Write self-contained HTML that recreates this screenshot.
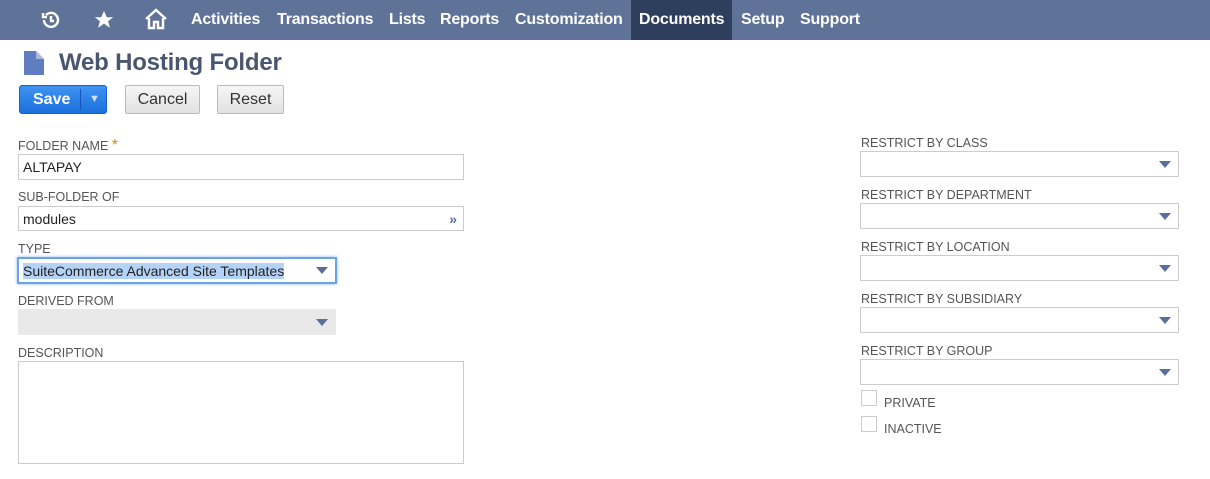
<!DOCTYPE html><html><head><style>
*{box-sizing:border-box;margin:0;padding:0}
body{width:1210px;height:479px;background:#fff;font-family:"Liberation Sans",sans-serif;position:relative;overflow:hidden;color:#333}
.nav{position:absolute;left:0;top:0;width:1210px;height:40px;background:#5f7399}
.nav span{position:absolute;top:0;height:40px;line-height:40px;color:#fff;font-weight:bold;font-size:16px;letter-spacing:-0.2px}
.act{background:#2e3f5e;padding:0 8px}
.a{position:absolute}
.lbl{position:absolute;font-size:12.5px;color:#555;text-transform:uppercase}
.box{position:absolute;border:1px solid #ccc;background:#fff;font-size:14px;color:#222;padding-left:4px;line-height:24px}
.tri{position:absolute;width:0;height:0;border-left:6px solid transparent;border-right:6px solid transparent;border-top:7px solid #5a6f96}
.btn{position:absolute;top:85px;height:29px;border:1px solid #bbb;border-radius:2px;background:linear-gradient(#f6f6f6,#e2e2e2);font-size:16px;color:#333;text-align:center;line-height:27px}
.cb{position:absolute;width:16px;height:16px;border:1px solid #ccc}
</style></head><body>
<div class="nav">
<svg class="a" style="left:40px;top:9px" width="22" height="22" viewBox="0 0 22 22" fill="none" stroke="#fff" stroke-width="2.4"><path d="M4 11a7 7 0 1 0 2-5"/><path d="M3 4v4h4" /><path d="M11 7v5h3"/></svg>
<svg class="a" style="left:93px;top:9px" width="22" height="22" viewBox="0 0 24 24"><path fill="#fff" d="M12 2l3 7h7l-5.6 4.3 2.1 7.2L12 16l-6.5 4.5 2.1-7.2L2 9h7z"/></svg>
<svg class="a" style="left:144px;top:7px" width="24" height="24" viewBox="0 0 24 24" fill="none" stroke="#fff" stroke-width="2.4"><path d="M2 12L12 3l10 9"/><path d="M5 11v10h5v-6h4v6h5V11"/></svg>
<span style="left:191px">Activities</span><span style="left:277px">Transactions</span><span style="left:389px">Lists</span><span style="left:440px">Reports</span><span style="left:515px">Customization</span>
<span class="act" style="left:631px;width:101px">Documents</span><span style="left:741px">Setup</span><span style="left:800px">Support</span>
</div>
<svg class="a" style="left:23px;top:49px" width="22" height="28" viewBox="0 0 22 28"><path fill="#5f7dc0" d="M1 2h12l8 8v16H1z"/><path fill="#a9b8dc" d="M13 2v8h8z"/></svg>
<div class="a" style="left:59px;top:49px;font-size:24px;font-weight:bold;color:#4a5670;letter-spacing:-0.2px">Web Hosting Folder</div>
<div class="a" style="left:19px;top:85px;width:88px;height:29px;border-radius:3px;background:linear-gradient(#3f93f2,#1a6fdc);border:1px solid #1860c8;color:#fff;font-weight:bold;font-size:16px;line-height:27px"><span style="position:absolute;left:13px">Save</span><span style="position:absolute;left:60px;top:3px;height:21px;border-left:1px solid #1656b8"></span><span style="position:absolute;left:69px;font-size:11px;color:#cfe0ff">▼</span></div>
<div class="btn" style="left:125px;width:75px">Cancel</div>
<div class="btn" style="left:217px;width:67px">Reset</div>
<div class="lbl" style="left:18px;top:137px">Folder Name <span style="color:#d08a00;font-size:16px">*</span></div>
<div class="box" style="left:18px;top:154px;width:446px;height:26px">ALTAPAY</div>
<div class="lbl" style="left:18px;top:190px">Sub-Folder of</div>
<div class="box" style="left:18px;top:206px;width:446px;height:25px">modules<span style="position:absolute;right:6px;top:0;color:#5a6f96;font-size:14px;font-weight:bold">»</span></div>
<div class="lbl" style="left:18px;top:242px">Type</div>
<div class="box" style="left:17px;top:257px;width:320px;height:27px;border:2px solid #6aa3e8;box-shadow:0 0 3px #8ab8f0"><span style="background:#b5d3f7">SuiteCommerce Advanced Site Templates</span></div>
<div class="tri" style="left:316px;top:267px"></div>
<div class="lbl" style="left:18px;top:294px">Derived From</div>
<div class="a" style="left:18px;top:309px;width:318px;height:26px;background:#e9e9e9"></div>
<div class="tri" style="left:316px;top:319px"></div>
<div class="lbl" style="left:18px;top:346px">Description</div>
<div class="box" style="left:18px;top:361px;width:446px;height:103px"></div>
<div class="lbl" style="left:861px;top:136px">Restrict by Class</div><div class="box" style="left:860px;top:151px;width:319px;height:26px"></div><div class="tri" style="left:1159px;top:161px"></div>
<div class="lbl" style="left:861px;top:188px">Restrict by Department</div><div class="box" style="left:860px;top:203px;width:319px;height:26px"></div><div class="tri" style="left:1159px;top:213px"></div>
<div class="lbl" style="left:861px;top:240px">Restrict by Location</div><div class="box" style="left:860px;top:255px;width:319px;height:26px"></div><div class="tri" style="left:1159px;top:265px"></div>
<div class="lbl" style="left:861px;top:292px">Restrict by Subsidiary</div><div class="box" style="left:860px;top:307px;width:319px;height:26px"></div><div class="tri" style="left:1159px;top:317px"></div>
<div class="lbl" style="left:861px;top:344px">Restrict by Group</div><div class="box" style="left:860px;top:359px;width:319px;height:26px"></div><div class="tri" style="left:1159px;top:369px"></div>
<div class="cb" style="left:861px;top:390px"></div><div class="lbl" style="left:884px;top:396px">Private</div>
<div class="cb" style="left:861px;top:416px"></div><div class="lbl" style="left:884px;top:422px">Inactive</div>
</body></html>
